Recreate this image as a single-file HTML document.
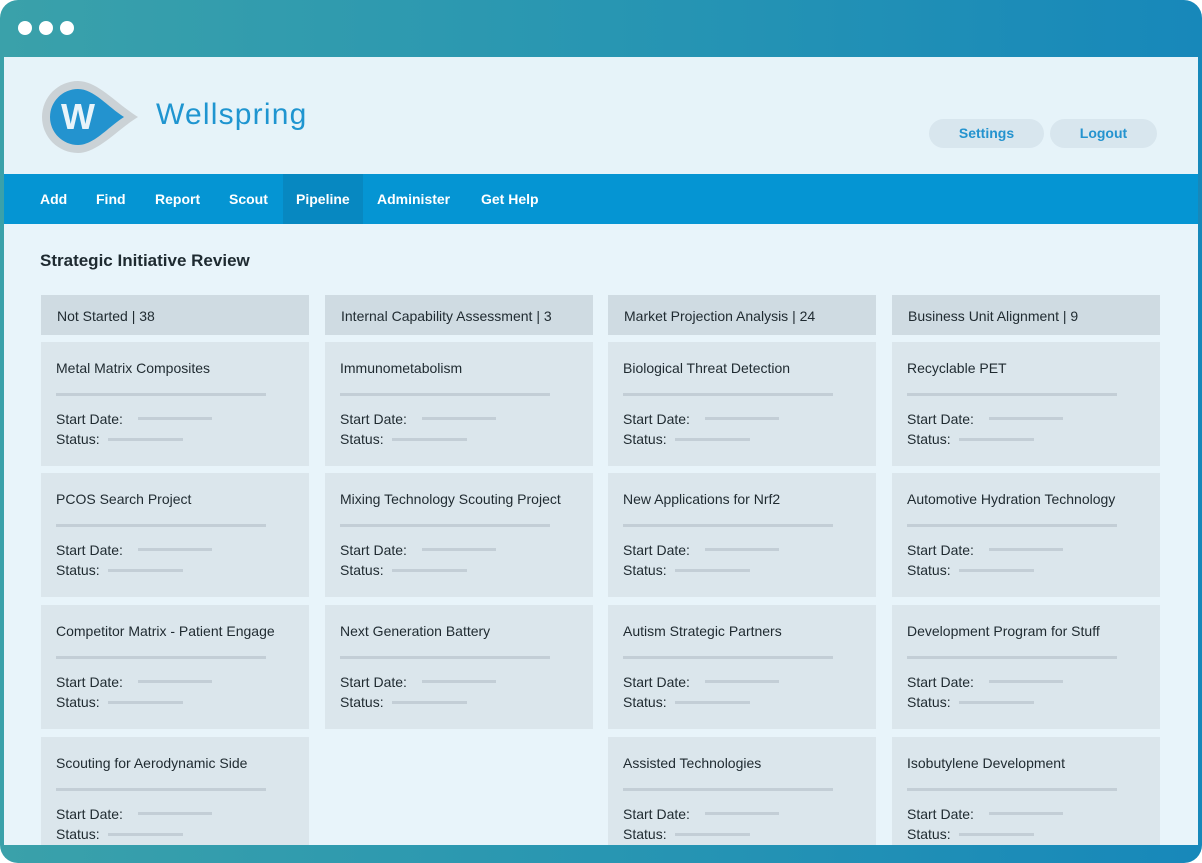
<!DOCTYPE html>
<html><head><style>
*{margin:0;padding:0;box-sizing:border-box}
body{width:1202px;height:863px;overflow:hidden;background:#fff;font-family:"Liberation Sans",sans-serif}
.frame{position:absolute;left:0;top:0;width:1202px;height:863px;border-radius:18px;background:linear-gradient(90deg,#3aa1aa,#2896b2 50%,#1788ba)}
.dot{position:absolute;top:21px;width:14px;height:14px;border-radius:50%;background:#fff}
.page{position:absolute;left:4px;top:57px;width:1194px;height:788px;background:#e8f4fa;overflow:hidden}
.head{position:absolute;left:0;top:0;width:1194px;height:117px;background:#e6f3f9}
.brand{position:absolute;left:152px;top:41px;font-size:30px;color:#1f95d0;letter-spacing:1.2px}
.btn{position:absolute;top:62px;height:29px;border-radius:15px;background:#d8e6ee;color:#2493cf;font-size:14px;font-weight:bold;text-align:center;line-height:29px}
.nav{position:absolute;left:0;top:117px;width:1194px;height:50px;background:#0595d3}
.nav span{position:absolute;top:0;line-height:50px;color:#fff;font-size:14px;font-weight:bold}
.nav .act{background:#0788c1;padding:0 13px}
h1{position:absolute;left:36px;top:194px;font-size:17px;font-weight:bold;color:#1e2a30}
.ch{position:absolute;height:40px;background:#cfdbe2;font-size:14px;color:#1f2a30;line-height:42px;padding-left:16px}
.card{position:absolute;width:268px;height:124px;background:#dbe6ec}
.card .t{position:absolute;left:15px;top:18px;font-size:14px;color:#1f2a30}
.card .l{position:absolute;left:15px;top:51px;width:210px;height:3px;background:#c3ced6}
.card .s{position:absolute;left:15px;top:67px;font-size:14px;color:#1f2a30;line-height:20px}
.card .l1{position:absolute;left:97px;top:75px;width:74px;height:3px;background:#c3ced6}
.card .l2{position:absolute;left:67px;top:96px;width:75px;height:3px;background:#c3ced6}
</style></head><body>
<div class="frame">
<div class="dot" style="left:18px"></div><div class="dot" style="left:39px"></div><div class="dot" style="left:60px"></div>
</div>
<div class="page">
<div class="head">
<svg style="position:absolute;left:34px;top:22px" width="106" height="76" viewBox="0 0 106 76">
<path d="M40 2 A36 36 0 1 0 40 74 C60 74 80 50 100 38 C80 26 60 2 40 2 Z" fill="#cbd2d6"/>
<path d="M40 10 A28 28 0 1 0 40 66 C56 66 70 48 86 38 C70 28 56 10 40 10 Z" fill="#2393cf"/>
<text x="40" y="50" text-anchor="middle" font-family="Liberation Sans" font-weight="bold" font-size="36" fill="#e8f4fa">W</text>
</svg>
<div class="brand">Wellspring</div>
<div class="btn" style="left:925px;width:115px">Settings</div>
<div class="btn" style="left:1046px;width:107px">Logout</div>
</div>
<div class="nav">
<span style="left:36px">Add</span><span style="left:92px">Find</span><span style="left:151px">Report</span><span style="left:225px">Scout</span><span class="act" style="left:279px">Pipeline</span><span style="left:373px">Administer</span><span style="left:477px">Get Help</span>
</div>
<h1>Strategic Initiative Review</h1>
<div class="ch" style="left:37px;top:238px;width:268px">Not Started | 38</div>
<div class="ch" style="left:321px;top:238px;width:268px">Internal Capability Assessment | 3</div>
<div class="ch" style="left:604px;top:238px;width:268px">Market Projection Analysis | 24</div>
<div class="ch" style="left:888px;top:238px;width:268px">Business Unit Alignment | 9</div>

<div class="card" style="left:37px;top:285px"><div class="t">Metal Matrix Composites</div><div class="l"></div><div class="s">Start Date:<br>Status:</div><div class="l1"></div><div class="l2"></div></div>
<div class="card" style="left:37px;top:416px"><div class="t">PCOS Search Project</div><div class="l"></div><div class="s">Start Date:<br>Status:</div><div class="l1"></div><div class="l2"></div></div>
<div class="card" style="left:37px;top:548px"><div class="t">Competitor Matrix - Patient Engage</div><div class="l"></div><div class="s">Start Date:<br>Status:</div><div class="l1"></div><div class="l2"></div></div>
<div class="card" style="left:37px;top:680px"><div class="t">Scouting for Aerodynamic Side</div><div class="l"></div><div class="s">Start Date:<br>Status:</div><div class="l1"></div><div class="l2"></div></div>

<div class="card" style="left:321px;top:285px"><div class="t">Immunometabolism</div><div class="l"></div><div class="s">Start Date:<br>Status:</div><div class="l1"></div><div class="l2"></div></div>
<div class="card" style="left:321px;top:416px"><div class="t">Mixing Technology Scouting Project</div><div class="l"></div><div class="s">Start Date:<br>Status:</div><div class="l1"></div><div class="l2"></div></div>
<div class="card" style="left:321px;top:548px"><div class="t">Next Generation Battery</div><div class="l"></div><div class="s">Start Date:<br>Status:</div><div class="l1"></div><div class="l2"></div></div>

<div class="card" style="left:604px;top:285px"><div class="t">Biological Threat Detection</div><div class="l"></div><div class="s">Start Date:<br>Status:</div><div class="l1"></div><div class="l2"></div></div>
<div class="card" style="left:604px;top:416px"><div class="t">New Applications for Nrf2</div><div class="l"></div><div class="s">Start Date:<br>Status:</div><div class="l1"></div><div class="l2"></div></div>
<div class="card" style="left:604px;top:548px"><div class="t">Autism Strategic Partners</div><div class="l"></div><div class="s">Start Date:<br>Status:</div><div class="l1"></div><div class="l2"></div></div>
<div class="card" style="left:604px;top:680px"><div class="t">Assisted Technologies</div><div class="l"></div><div class="s">Start Date:<br>Status:</div><div class="l1"></div><div class="l2"></div></div>

<div class="card" style="left:888px;top:285px"><div class="t">Recyclable PET</div><div class="l"></div><div class="s">Start Date:<br>Status:</div><div class="l1"></div><div class="l2"></div></div>
<div class="card" style="left:888px;top:416px"><div class="t">Automotive Hydration Technology</div><div class="l"></div><div class="s">Start Date:<br>Status:</div><div class="l1"></div><div class="l2"></div></div>
<div class="card" style="left:888px;top:548px"><div class="t">Development Program for Stuff</div><div class="l"></div><div class="s">Start Date:<br>Status:</div><div class="l1"></div><div class="l2"></div></div>
<div class="card" style="left:888px;top:680px"><div class="t">Isobutylene Development</div><div class="l"></div><div class="s">Start Date:<br>Status:</div><div class="l1"></div><div class="l2"></div></div>
</div>
</body></html>
